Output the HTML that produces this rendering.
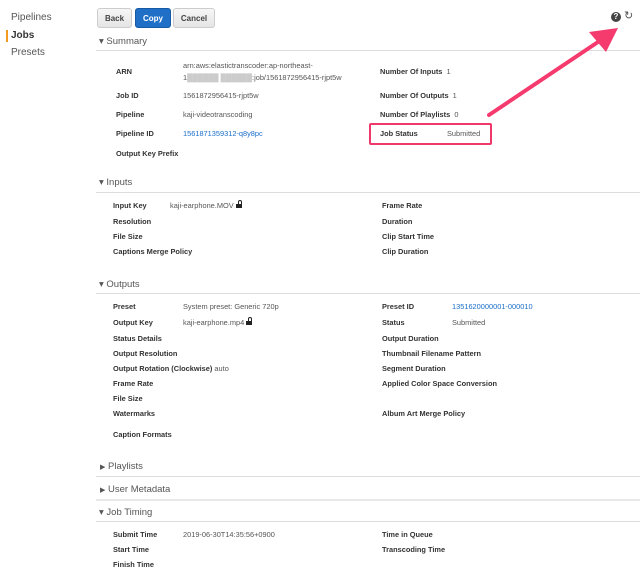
<!DOCTYPE html>
<html><head><meta charset="utf-8"><style>
body{margin:0;width:640px;height:588px;background:#fff;position:relative;overflow:hidden;font-family:"Liberation Sans",Arial,sans-serif;color:#444}
.t{position:absolute;white-space:nowrap;line-height:10px}
.l{font-size:7.4px;font-weight:bold;color:#333}
.v{font-size:7.4px;color:#555;font-weight:normal}
.a{color:#1a6fc9}
.h{font-size:9.5px;color:#555}
.ln{position:absolute;left:96px;right:0;height:1px;background:#ddd}
.nav{position:absolute;left:11px;font-size:10px;color:#555}
.btn{position:absolute;top:8px;height:20px;border-radius:3px;font-size:8px;font-weight:bold;text-align:center;line-height:20px;box-sizing:border-box}
.g{background:linear-gradient(#f7f7f7,#e5e5e5);border:1px solid #ccc;color:#444}
.lk{display:inline-block;width:6px;height:4px;background:#222;position:relative;margin-left:2px;vertical-align:0}
.lk:after{content:"";position:absolute;left:2px;top:-4px;width:4px;height:4px;border:1.2px solid #222;border-bottom:none;border-radius:3px 3px 0 0;box-sizing:border-box}
</style></head><body>
<div class="nav" style="top:12px">Pipelines</div>
<div style="position:absolute;left:6px;top:30px;width:2px;height:12px;background:#f49a1f"></div>
<div class="nav" style="top:30px;font-weight:bold;color:#333">Jobs</div>
<div class="nav" style="top:47px">Presets</div>
<div class="btn g" style="left:97px;width:35px">Back</div>
<div class="btn" style="left:135px;width:36px;background:#1f6fc7;border:1px solid #165aa6;color:#fff">Copy</div>
<div class="btn g" style="left:173px;width:42px">Cancel</div>
<div style="position:absolute;left:611px;top:12px;width:10px;height:10px;border-radius:50%;background:#444;color:#fff;font-size:8px;font-weight:bold;text-align:center;line-height:10px">?</div>
<div class="t" style="left:624px;top:11px;font-size:11px;color:#555">↻</div>

<div class="t h" style="left:99px;top:37px">▾ Summary</div><div class="ln" style="top:50px"></div>
<div class="t l" style="left:116px;top:67px">ARN</div>
<div class="t v" style="left:183px;top:61px">arn:aws:elastictranscoder:ap-northeast-</div>
<div class="t v" style="left:183px;top:73px">1<span style="color:#ccc">██████ ██████</span>:job/1561872956415-rjpt5w</div>
<div class="t l" style="left:116px;top:91px">Job ID</div><div class="t v" style="left:183px;top:91px">1561872956415-rjpt5w</div>
<div class="t l" style="left:116px;top:110px">Pipeline</div><div class="t v" style="left:183px;top:110px">kaji-videotranscoding</div>
<div class="t l" style="left:116px;top:129px">Pipeline ID</div><div class="t v a" style="left:183px;top:129px">1561871359312-q8y8pc</div>
<div class="t l" style="left:116px;top:149px">Output Key Prefix</div>
<div class="t l" style="left:380px;top:67px">Number Of Inputs <span class="v">&nbsp;1</span></div>
<div class="t l" style="left:380px;top:91px">Number Of Outputs <span class="v">&nbsp;1</span></div>
<div class="t l" style="left:380px;top:110px">Number Of Playlists <span class="v">&nbsp;0</span></div>
<div class="t l" style="left:380px;top:129px">Job Status</div><div class="t v" style="left:447px;top:129px">Submitted</div>
<div style="position:absolute;left:369px;top:123px;width:123px;height:22px;border:2.5px solid #f0386b;border-radius:2px;box-sizing:border-box"></div>

<div class="t h" style="left:99px;top:178px">▾ Inputs</div><div class="ln" style="top:192px"></div>
<div class="t l" style="left:113px;top:201px">Input Key</div><div class="t v" style="left:170px;top:201px">kaji-earphone.MOV<span class="lk"></span></div>
<div class="t l" style="left:113px;top:217px">Resolution</div>
<div class="t l" style="left:113px;top:232px">File Size</div>
<div class="t l" style="left:113px;top:247px">Captions Merge Policy</div>
<div class="t l" style="left:382px;top:201px">Frame Rate</div>
<div class="t l" style="left:382px;top:217px">Duration</div>
<div class="t l" style="left:382px;top:232px">Clip Start Time</div>
<div class="t l" style="left:382px;top:247px">Clip Duration</div>

<div class="t h" style="left:99px;top:280px">▾ Outputs</div><div class="ln" style="top:293px"></div>
<div class="t l" style="left:113px;top:302px">Preset</div><div class="t v" style="left:183px;top:302px">System preset: Generic 720p</div>
<div class="t l" style="left:113px;top:318px">Output Key</div><div class="t v" style="left:183px;top:318px">kaji-earphone.mp4<span class="lk"></span></div>
<div class="t l" style="left:113px;top:334px">Status Details</div>
<div class="t l" style="left:113px;top:349px">Output Resolution</div>
<div class="t l" style="left:113px;top:364px">Output Rotation (Clockwise) <span class="v">auto</span></div>
<div class="t l" style="left:113px;top:379px">Frame Rate</div>
<div class="t l" style="left:113px;top:394px">File Size</div>
<div class="t l" style="left:113px;top:409px">Watermarks</div>
<div class="t l" style="left:113px;top:430px">Caption Formats</div>
<div class="t l" style="left:382px;top:302px">Preset ID</div><div class="t v a" style="left:452px;top:302px">1351620000001-000010</div>
<div class="t l" style="left:382px;top:318px">Status</div><div class="t v" style="left:452px;top:318px">Submitted</div>
<div class="t l" style="left:382px;top:334px">Output Duration</div>
<div class="t l" style="left:382px;top:349px">Thumbnail Filename Pattern</div>
<div class="t l" style="left:382px;top:364px">Segment Duration</div>
<div class="t l" style="left:382px;top:379px">Applied Color Space Conversion</div>
<div class="t l" style="left:382px;top:409px">Album Art Merge Policy</div>

<div class="t h" style="left:100px;top:462px"><span style="font-size:7px">▶</span> Playlists</div><div class="ln" style="top:476px"></div>
<div class="t h" style="left:100px;top:485px"><span style="font-size:7px">▶</span> User Metadata</div><div class="ln" style="top:499px;height:2px;background:#e8e8e8"></div>
<div class="t h" style="left:99px;top:508px">▾ Job Timing</div><div class="ln" style="top:521px"></div>
<div class="t l" style="left:113px;top:530px">Submit Time</div><div class="t v" style="left:183px;top:530px">2019-06-30T14:35:56+0900</div>
<div class="t l" style="left:113px;top:545px">Start Time</div>
<div class="t l" style="left:113px;top:560px">Finish Time</div>
<div class="t l" style="left:382px;top:530px">Time in Queue</div>
<div class="t l" style="left:382px;top:545px">Transcoding Time</div>

<svg style="position:absolute;left:0;top:0" width="640" height="588">
<line x1="489" y1="115" x2="598" y2="42" stroke="#f53a6e" stroke-width="4" stroke-linecap="round"/>
<polygon points="618,28 589,32 606,52" fill="#f53a6e"/>
</svg>
</body></html>
